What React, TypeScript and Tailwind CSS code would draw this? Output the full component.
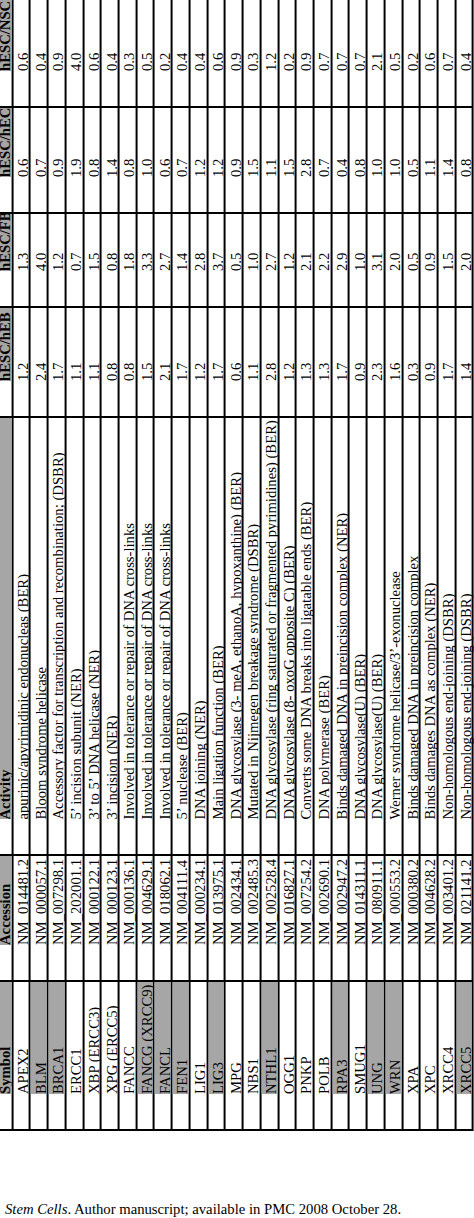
import React from "react";

type Row = {
  sym: string;
  acc: string;
  act: string;
  heb: string;
  fb: string;
  hec: string;
  nsc: string;
  shade?: boolean;
};

const rows: Row[] = [
  { sym: "APEX2", acc: "NM_014481.2", act: "apurinic/apyrimidinic endonucleas (BER)", heb: "1.2", fb: "1.3", hec: "0.6", nsc: "0.6" },
  { sym: "BLM", acc: "NM_000057.1", act: "Bloom syndrome helicase", heb: "2.4", fb: "4.0", hec: "0.7", nsc: "0.4", shade: true },
  { sym: "BRCA1", acc: "NM_007298.1", act: "Accessory factor for transcription and recombination; (DSBR)", heb: "1.7", fb: "1.2", hec: "0.9", nsc: "0.9", shade: true },
  { sym: "ERCC1", acc: "NM_202001.1", act: "5\u2019 incision subunit (NER)", heb: "1.1", fb: "0.7", hec: "1.9", nsc: "4.0" },
  { sym: "XBP (ERCC3)", acc: "NM_000122.1", act: "3\u2019 to 5\u2019 DNA helicase (NER)", heb: "1.1", fb: "1.5", hec: "0.8", nsc: "0.6" },
  { sym: "XPG (ERCC5)", acc: "NM_000123.1", act: "3\u2019 incision (NER)", heb: "0.8", fb: "0.8", hec: "1.4", nsc: "0.4" },
  { sym: "FANCC", acc: "NM_000136.1", act: "Involved in tolerance or repair of DNA cross-links", heb: "0.8", fb: "1.8", hec: "0.8", nsc: "0.3" },
  { sym: "FANCG (XRCC9)", acc: "NM_004629.1", act: "Involved in tolerance or repair of DNA cross-links", heb: "1.5", fb: "3.3", hec: "1.0", nsc: "0.5", shade: true },
  { sym: "FANCL", acc: "NM_018062.1", act: "Involved in tolerance or repair of DNA cross-links", heb: "2.1", fb: "2.7", hec: "0.6", nsc: "0.2", shade: true },
  { sym: "FEN1", acc: "NM_004111.4", act: "5\u2019 nuclease (BER)", heb: "1.7", fb: "1.4", hec: "0.7", nsc: "0.4", shade: true },
  { sym: "LIG1", acc: "NM_000234.1", act: "DNA joining (NER)", heb: "1.2", fb: "2.8", hec: "1.2", nsc: "0.4" },
  { sym: "LIG3", acc: "NM_013975.1", act: "Main ligation function (BER)", heb: "1.7", fb: "3.7", hec: "1.2", nsc: "0.6", shade: true },
  { sym: "MPG", acc: "NM_002434.1", act: "DNA glycosylase (3- meA, ethanoA, hypoxanthine) (BER)", heb: "0.6", fb: "0.5", hec: "0.9", nsc: "0.9" },
  { sym: "NBS1", acc: "NM_002485.3", act: "Mutated in Nijmegen breakage syndrome (DSBR)", heb: "1.1", fb: "1.0", hec: "1.5", nsc: "0.3" },
  { sym: "NTHL1", acc: "NM_002528.4", act: "DNA glycosylase (ring saturated or fragmented pyrimidines) (BER)", heb: "2.8", fb: "2.7", hec: "1.1", nsc: "1.2", shade: true },
  { sym: "OGG1", acc: "NM_016827.1", act: "DNA glycosylase (8- oxoG opposite C) (BER)", heb: "1.2", fb: "1.2", hec: "1.5", nsc: "0.2" },
  { sym: "PNKP", acc: "NM_007254.2", act: "Converts some DNA breaks into ligatable ends (BER)", heb: "1.3", fb: "2.1", hec: "2.8", nsc: "0.9" },
  { sym: "POLB", acc: "NM_002690.1", act: "DNA polymerase (BER)", heb: "1.3", fb: "2.2", hec: "0.7", nsc: "0.7" },
  { sym: "RPA3", acc: "NM_002947.2", act: "Binds damaged DNA in preincision complex (NER)", heb: "1.7", fb: "2.9", hec: "0.4", nsc: "0.7", shade: true },
  { sym: "SMUG1", acc: "NM_014311.1", act: "DNA glycosylase(U) (BER)", heb: "0.9", fb: "1.0", hec: "0.8", nsc: "0.7" },
  { sym: "UNG", acc: "NM_080911.1", act: "DNA glycosylase(U) (BER)", heb: "2.3", fb: "3.1", hec: "1.0", nsc: "2.1", shade: true },
  { sym: "WRN", acc: "NM_000553.2", act: "Werner syndrome helicase/3\u2019-exonuclease", heb: "1.6", fb: "2.0", hec: "1.0", nsc: "0.5", shade: true },
  { sym: "XPA", acc: "NM_000380.2", act: "Binds damaged DNA in preincision complex", heb: "0.3", fb: "0.5", hec: "0.5", nsc: "0.2" },
  { sym: "XPC", acc: "NM_004628.2", act: "Binds damages DNA as complex (NER)", heb: "0.9", fb: "0.9", hec: "1.1", nsc: "0.6" },
  { sym: "XRCC4", acc: "NM_003401.2", act: "Non-homologous end-joining (DSBR)", heb: "1.7", fb: "1.5", hec: "1.4", nsc: "0.7" },
  { sym: "XRCC5", acc: "NM_021141.2", act: "Non-homologous end-joining (DSBR)", heb: "1.4", fb: "2.0", hec: "0.8", nsc: "0.4", shade: true },
];

function Cell({ text, shade, bold }: { text: string; shade?: boolean; bold?: boolean }) {
  return (
    <div className="flex bg-white">
      <div className="w-[35px] shrink-0" />
      <div
        className={
          shade
            ? "flex min-w-0 flex-1 items-end whitespace-nowrap bg-[#a6a6a6] leading-[12.5px]"
            : "flex min-w-0 flex-1 items-end whitespace-nowrap leading-[12.5px]"
        }
      >
        <span className={bold ? "font-bold" : ""}>{text}</span>
      </div>
    </div>
  );
}

export default function App() {
  const headers = ["Symbol", "Accession", "Activity", "hESC/hEB", "hESC/FB", "hESC/hEC", "hESC/NSC"];
  return (
    <div className="w-[474px] bg-white font-['Liberation_Serif',serif] text-black">
      <div className="h-[1131px] w-[474px] overflow-hidden">
        <div className="grid w-max origin-top-left grid-cols-[147px_123.5px_436.5px_108px_92px_104px_108px] auto-rows-[15.72px] gap-[2px] bg-black p-[2px] text-[14.7px] [transform:translate(-6.42px,1131px)_rotate(-90deg)]">
          {headers.map((h) => (
            <Cell key={h} text={h} shade bold />
          ))}
          {rows.map((r) => (
            <React.Fragment key={r.sym}>
              <Cell text={r.sym} shade={r.shade} />
              <Cell text={r.acc} />
              <Cell text={r.act} />
              <Cell text={r.heb} />
              <Cell text={r.fb} />
              <Cell text={r.hec} />
              <Cell text={r.nsc} />
            </React.Fragment>
          ))}
        </div>
      </div>
      <div className="pl-[5px] pt-[69.5px] text-[14.7px] leading-[17px]">
        <i>Stem Cells</i>. Author manuscript; available in PMC 2008 October 28.
      </div>
    </div>
  );
}
